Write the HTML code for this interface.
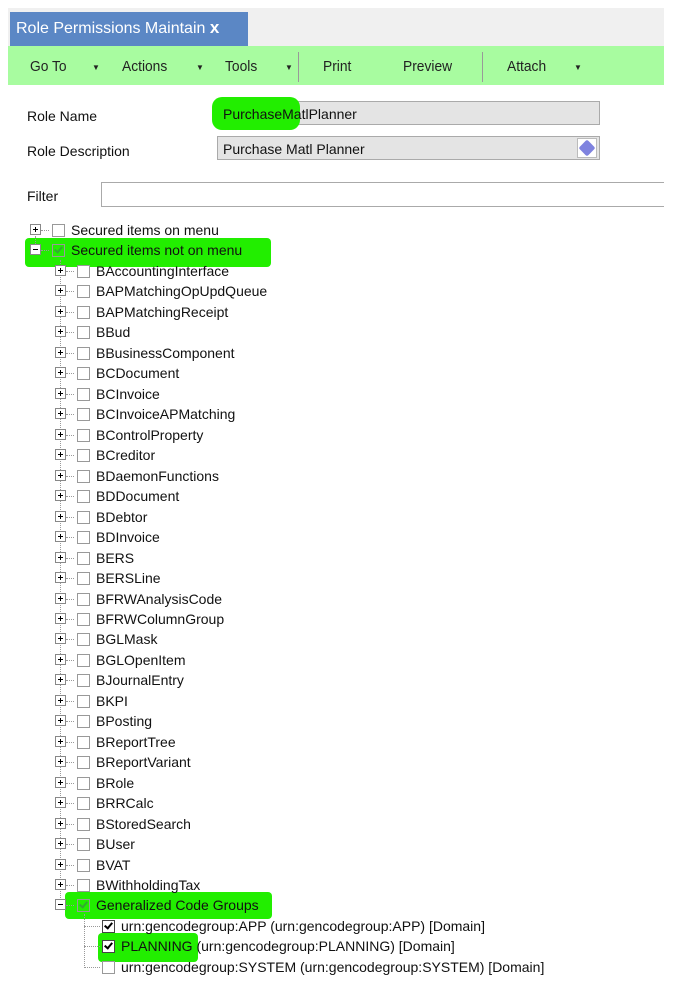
<!DOCTYPE html>
<html><head><meta charset="utf-8"><style>
*{margin:0;padding:0;box-sizing:border-box}
body{width:673px;height:984px;background:#fff;font-family:"Liberation Sans",sans-serif;position:relative;overflow:hidden;color:#111}
.abs{position:absolute}
.tb{font-size:15px;color:#222;top:58px;transform:scaleX(.92);transform-origin:left}
.ar{font-size:8px;top:63px;color:#222}
.lbl{font-size:14px;color:#111}
.row{position:absolute;height:20px;font-size:14px;line-height:20px;white-space:nowrap;color:#111}
.ex{position:absolute;width:11px;height:11px;border:1px solid #888;background:#fff;top:4px}
.ex:before{content:"";position:absolute;left:2px;top:4px;width:5px;height:1px;background:#000}
.ex.p:after{content:"";position:absolute;left:4px;top:2px;width:1px;height:5px;background:#000}
.cb{position:absolute;width:13px;height:13px;border:1px solid #999;background:#fff;top:4px}
.hl{position:absolute;background:#22ee00;border-radius:4px}
.vl{position:absolute;border-left:1px dotted #999}
.hd{position:absolute;border-top:1px dotted #999;width:8px}
</style></head><body>
<div class="abs" style="left:8px;top:8px;width:656px;height:38px;background:#f0f0f0"></div>
<div class="abs" style="left:10px;top:12px;width:238px;height:34px;background:#5b87c5;color:#fff;font-size:16px;line-height:32px;padding-left:6px">Role Permissions Maintain <b style="font-size:17px">x</b></div>
<div class="abs" style="left:8px;top:46px;width:656px;height:39px;background:#a8fca0"></div>
<div class="abs" style="left:298px;top:52px;width:1px;height:30px;background:#999"></div>
<div class="abs" style="left:482px;top:52px;width:1px;height:30px;background:#999"></div>
<div class="abs tb" style="left:30px">Go To</div><div class="abs ar" style="left:92px">▼</div>
<div class="abs tb" style="left:122px">Actions</div><div class="abs ar" style="left:196px">▼</div>
<div class="abs tb" style="left:225px">Tools</div><div class="abs ar" style="left:285px">▼</div>
<div class="abs tb" style="left:323px">Print</div>
<div class="abs tb" style="left:403px">Preview</div>
<div class="abs tb" style="left:507px">Attach</div><div class="abs ar" style="left:574px">▼</div>

<div class="abs lbl" style="left:27px;top:108px">Role Name</div>
<div class="abs lbl" style="left:27px;top:143px">Role Description</div>
<div class="abs lbl" style="left:27px;top:188px">Filter</div>
<div class="abs" style="left:217px;top:101px;width:383px;height:24px;background:#e4e4e4;border:1px solid #aaa"></div>
<div class="hl" style="left:212px;top:97px;width:88px;height:33px;border-radius:10px"></div>
<div class="abs lbl" style="left:223px;top:106px">PurchaseMatlPlanner</div>
<div class="abs" style="left:217px;top:136px;width:383px;height:24px;background:#e4e4e4;border:1px solid #aaa"></div>
<div class="abs lbl" style="left:223px;top:141px">Purchase Matl Planner</div>
<div class="abs" style="left:577px;top:138px;width:20px;height:20px;background:#fff;border:1px solid #bbb"><div style="position:absolute;left:3px;top:3px;width:12px;height:12px;background:#7f83df;transform:rotate(45deg);border-radius:2px"></div></div>
<div class="abs" style="left:101px;top:182px;width:563px;height:25px;border:1px solid #aaa;border-right:none;background:#fff"></div>

<div class="hl" style="left:25px;top:238px;width:246px;height:29px"></div>
<div class="hl" style="left:65px;top:892px;width:207px;height:27px"></div>
<div class="hl" style="left:98px;top:933px;width:100px;height:29px"></div>

<div class="vl" style="left:35px;top:236px;height:16px"></div>
<div class="vl" style="left:60px;top:260px;height:646px"></div>
<div class="vl" style="left:84px;top:914px;height:54px"></div>
<div id="tree"></div>
<script>
var t=document.getElementById('tree'),h='';
function row(y,lvl,exp,chk,txt){
 var x0=[30,55,80][lvl];
 var s='';
 if(exp) s+='<div class="ex '+(exp=='p'?'p':'')+'" style="left:'+x0+'px"></div><div class="hd" style="left:'+(x0+11)+'px;top:10px"></div>';
 else s+='<div class="hd" style="left:'+(x0+4)+'px;top:10px;width:16px"></div>';
 var cx=x0+22;
 s+='<div class="cb" style="left:'+cx+'px;'+(chk==2?'border-color:#444':'')+(chk==1?'background:transparent;':'')+'">'+(chk?'<div style="position:absolute;left:3px;top:0px;width:5px;height:8px;border:solid '+(chk==2?'#000':'#3a3')+';border-width:0 2px 2px 0;transform:rotate(40deg)"></div>':'')+'</div>';
 s+='<span style="position:absolute;left:'+(cx+19)+'px">'+txt+'</span>';
 h+='<div class="row" style="top:'+(y-10)+'px;left:0;width:673px">'+s+'</div>';
}
row(230,0,'p',0,'Secured items on menu');
row(250,0,'m',1,'Secured items not on menu');
var b=['BAccountingInterface','BAPMatchingOpUpdQueue','BAPMatchingReceipt','BBud','BBusinessComponent','BCDocument','BCInvoice','BCInvoiceAPMatching','BControlProperty','BCreditor','BDaemonFunctions','BDDocument','BDebtor','BDInvoice','BERS','BERSLine','BFRWAnalysisCode','BFRWColumnGroup','BGLMask','BGLOpenItem','BJournalEntry','BKPI','BPosting','BReportTree','BReportVariant','BRole','BRRCalc','BStoredSearch','BUser','BVAT','BWithholdingTax'];
b.forEach(function(n,i){row(271+i*20.47,1,'p',0,n)});
row(905,1,'m',1,'Generalized Code Groups');
row(926,2,0,2,'urn:gencodegroup:APP (urn:gencodegroup:APP) [Domain]');
row(946,2,0,2,'PLANNING (urn:gencodegroup:PLANNING) [Domain]');
row(967,2,0,0,'urn:gencodegroup:SYSTEM (urn:gencodegroup:SYSTEM) [Domain]');
t.innerHTML=h;
</script>
</body></html>
